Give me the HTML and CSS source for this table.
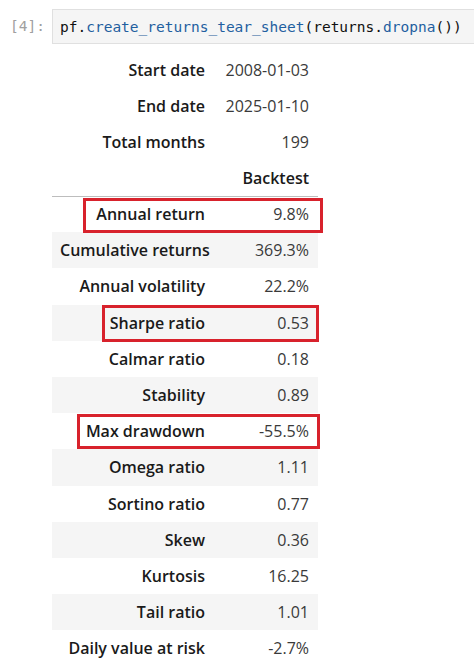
FILE: index.html
```html
<!DOCTYPE html>
<html lang="en">
<head>
    <meta charset="UTF-8">
    <meta name="viewport" content="width=device-width, initial-scale=1.0">
    <title>Tear sheet</title>
    <link rel="stylesheet" href="styles.css">
</head>
<body>
    <div class="cell">
        <div class="prompt">[4]:</div>
        <div class="code">pf.<span class="prop">create_returns_tear_sheet</span>(returns.<span class="prop">dropna</span>())</div>
    </div>

    <div class="output">
        <div class="table-wrap">
            <table class="stats">
                <colgroup>
                    <col class="col-label">
                    <col class="col-value">
                </colgroup>
                <thead>
                    <tr><th>Start date</th><td>2008-01-03</td></tr>
                    <tr><th>End date</th><td>2025-01-10</td></tr>
                    <tr><th>Total months</th><td>199</td></tr>
                    <tr class="head-row"><th></th><th>Backtest</th></tr>
                </thead>
                <tbody>
                    <tr><th>Annual return</th><td>9.8%</td></tr>
                    <tr><th>Cumulative returns</th><td>369.3%</td></tr>
                    <tr><th>Annual volatility</th><td>22.2%</td></tr>
                    <tr><th>Sharpe ratio</th><td>0.53</td></tr>
                    <tr><th>Calmar ratio</th><td>0.18</td></tr>
                    <tr><th>Stability</th><td>0.89</td></tr>
                    <tr><th>Max drawdown</th><td>-55.5%</td></tr>
                    <tr><th>Omega ratio</th><td>1.11</td></tr>
                    <tr><th>Sortino ratio</th><td>0.77</td></tr>
                    <tr><th>Skew</th><td>0.36</td></tr>
                    <tr><th>Kurtosis</th><td>16.25</td></tr>
                    <tr><th>Tail ratio</th><td>1.01</td></tr>
                    <tr><th>Daily value at risk</th><td>-2.7%</td></tr>
                </tbody>
            </table>

            <!-- highlight boxes drawn over the table -->
            <div class="mark mark-annual"></div>
            <div class="mark mark-sharpe"></div>
            <div class="mark mark-drawdown"></div>
        </div>
    </div>
</body>
</html>
```

FILE: styles.css
```css
body {
    margin: 0;
    padding: 0;
    background: #ffffff;
    overflow: hidden;
    font-family: "Open Sans", "Noto Sans", sans-serif;
}

.cell {
    display: flex;
    align-items: flex-start;
    padding-top: 9px;
}

.prompt {
    width: 52px;
    box-sizing: border-box;
    padding: 8px 0 0 10px;
    color: #a0a0a0;
    font-family: "DejaVu Sans Mono", monospace;
    font-size: 14.5px;
    line-height: 18px;
}

.code {
    flex: 1;
    height: 35px;
    box-sizing: border-box;
    padding: 8px 0 0 7px;
    background: #f5f5f5;
    border: 1px solid #e0e0e0;
    border-right: none;
    color: #111111;
    font-family: "DejaVu Sans Mono", monospace;
    font-size: 14.5px;
    line-height: 18px;
    white-space: nowrap;
}

.code .prop {
    color: #1f5fa0;
}

.output {
    padding: 8px 0 0 52px;
}

.table-wrap {
    position: relative;
    width: 266px;
}

.stats {
    border-collapse: collapse;
    table-layout: fixed;
    width: 266px;
    font-size: 16px;
    color: #1a1a1a;
}

.col-label {
    width: 162px;
}

.col-value {
    width: 104px;
}

.stats th,
.stats td {
    padding: 0 9px 0 8px;
    text-align: right;
    white-space: nowrap;
}

.stats th {
    font-weight: 600;
    color: #1a1a1a;
}

.stats td {
    font-weight: 400;
    color: #3a3a3a;
}

.stats thead tr {
    height: 36px;
}

.stats .head-row {
    border-bottom: 1px solid #bdbdbd;
}

.stats tbody tr {
    height: 36.2px;
}

.stats tbody tr:nth-child(even) {
    background: #f5f5f5;
}

.mark {
    position: absolute;
    box-sizing: border-box;
    border: 3px solid #d8222c;
}

.mark-annual {
    left: 31px;
    top: 146px;
    width: 240px;
    height: 35px;
}

.mark-sharpe {
    left: 50px;
    top: 253px;
    width: 217px;
    height: 37px;
}

.mark-drawdown {
    left: 25px;
    top: 362px;
    width: 243px;
    height: 35px;
}
```
